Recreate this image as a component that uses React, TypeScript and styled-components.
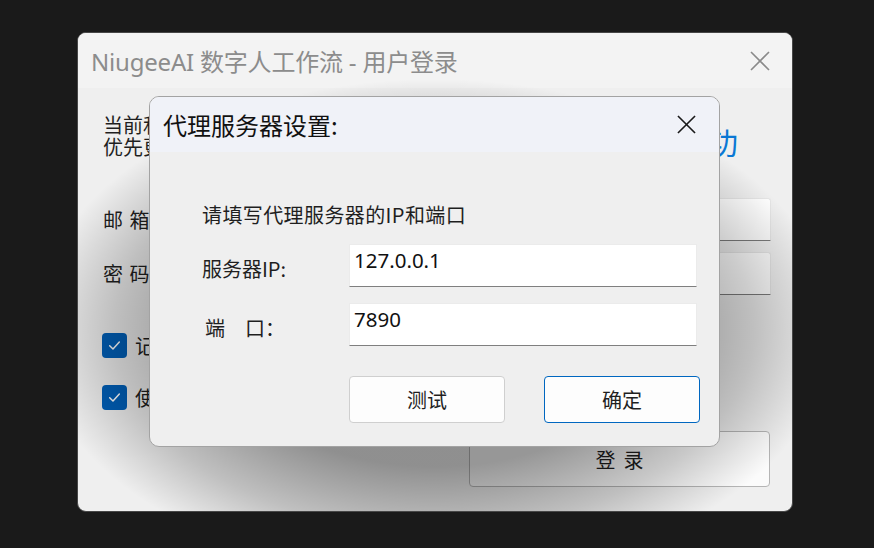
import React from "react";
import styled, { createGlobalStyle } from "styled-components";

const Global = createGlobalStyle`
  html, body { margin: 0; padding: 0; background: #1a1a1a; }
  body { width: 874px; height: 548px; overflow: hidden; font-family: "Noto Sans", "Noto Sans CJK SC", sans-serif; }
`;

const Stage = styled.div`
  width: 874px;
  height: 548px;
  box-sizing: border-box;
  padding: 32px 0 0 77px;
`;

const Window = styled.div`
  position: relative;
  width: 716px;
  height: 480px;
  box-sizing: border-box;
  border: 1px solid #474747;
  border-radius: 9px;
  background: #efefef;
  overflow: hidden;
  display: flex;
  flex-direction: column;
`;

const TitleBar = styled.div`
  height: 55px;
  flex: none;
  background: #f3f3f3;
  display: flex;
  align-items: center;
  justify-content: space-between;
  padding: 0 22px 0 13px;
`;

const TitleText = styled.div`
  font-family: "Noto Sans", "Noto Sans CJK SC", sans-serif;
  font-size: 24px;
  color: #8c8c8c;
  font-weight: 400;
  letter-spacing: -0.2px;
`;

const Body = styled.div`
  flex: 1;
  display: flex;
  flex-direction: column;
  padding: 24px 21px 0 25px;
`;

const StatusRow = styled.div`
  display: flex;
  justify-content: space-between;
  align-items: flex-start;
  height: 46px;
`;

const StatusText = styled.div`
  font-family: "Noto Sans CJK SC", sans-serif;
  font-size: 20px;
  line-height: 22px;
  color: #1f1f1f;
  padding-top: 2px;
`;

const StatusBlue = styled.div`
  font-family: "Noto Sans CJK SC", sans-serif;
  font-size: 30px;
  line-height: 34px;
  color: #0a78d4;
  margin-top: 12px;
  margin-right: 33px;
`;

const FormRow = styled.div<{ $top: number }>`
  display: flex;
  align-items: center;
  height: 43px;
  margin-top: ${(p) => p.$top}px;
`;

const BackLabel = styled.div`
  width: 72px;
  font-family: "Noto Sans CJK SC", sans-serif;
  font-size: 20px;
  color: #1f1f1f;
  letter-spacing: 1px;
`;

const BackInput = styled.div`
  flex: 1;
  height: 43px;
  box-sizing: border-box;
  background: #ffffff;
  border: 1px solid #e6e6e6;
  border-bottom: 1px solid #7c7c7c;
  border-radius: 3px 3px 0 0;
`;

const CheckRow = styled.div<{ $top: number }>`
  display: flex;
  align-items: center;
  gap: 8px;
  height: 25px;
  margin-top: ${(p) => p.$top}px;
  margin-left: -1px;
`;

const CheckBox = styled.div`
  width: 25px;
  height: 25px;
  border-radius: 4px;
  background: #005fb8;
  display: flex;
  align-items: center;
  justify-content: center;
`;

const CheckLabel = styled.div`
  font-family: "Noto Sans CJK SC", sans-serif;
  font-size: 20px;
  color: #1f1f1f;
`;

const LoginButton = styled.div`
  align-self: flex-end;
  margin-top: 21px;
  margin-right: 1px;
  width: 301px;
  height: 56px;
  box-sizing: border-box;
  border: 1px solid #b5b5b5;
  border-radius: 4px;
  background: #fbfbfb;
  display: flex;
  align-items: center;
  justify-content: center;
  font-family: "Noto Sans CJK SC", sans-serif;
  font-size: 20px;
  color: #1f1f1f;
  letter-spacing: 8px;
  padding-left: 8px;
`;

const ModalLayer = styled.div`
  position: absolute;
  inset: 0;
  z-index: 2;
  pointer-events: none;
`;

const DialogShadow = styled.div`
  position: absolute;
  left: -44px;
  top: 46px;
  width: 800px;
  height: 500px;
  background: radial-gradient(farthest-side at 50% 50%, rgba(0, 0, 0, 0.4) 55%, rgba(0, 0, 0, 0.2) 80%, rgba(0, 0, 0, 0) 100%);
`;

const Dialog = styled.div`
  position: absolute;
  left: 71px;
  top: 63px;
  width: 571px;
  height: 351px;
  box-sizing: border-box;
  border: 1px solid #a3a3a3;
  border-radius: 10px;
  background: #efefef;
  display: flex;
  flex-direction: column;
  pointer-events: auto;
`;

const DialogHeader = styled.div`
  height: 55px;
  flex: none;
  background: #f0f2f8;
  border-radius: 9px 9px 0 0;
  display: flex;
  align-items: center;
  justify-content: space-between;
  padding: 0 23px 0 13px;
`;

const DialogTitle = styled.div`
  font-family: "Noto Sans CJK SC", sans-serif;
  font-size: 24px;
  color: #111;
  margin-top: -1px;
`;

const DialogBody = styled.div`
  display: flex;
  flex-direction: column;
  padding: 50px 0 0 52px;
`;

const Hint = styled.div`
  font-family: "Noto Sans CJK SC", sans-serif;
  font-size: 20px;
  line-height: 26px;
  color: #1f1f1f;
  letter-spacing: 0.4px;
`;

const FieldRow = styled.div<{ $top: number }>`
  display: flex;
  align-items: center;
  margin-top: ${(p) => p.$top}px;
`;

const FieldLabel = styled.div<{ $indent?: number }>`
  width: 147px;
  box-sizing: border-box;
  padding-left: ${(p) => p.$indent ?? 0}px;
  padding-top: 6px;
  font-family: "Noto Sans CJK SC", sans-serif;
  font-size: 20px;
  color: #1f1f1f;
  white-space: pre;
`;

const FieldInput = styled.div`
  width: 348px;
  height: 43px;
  box-sizing: border-box;
  background: #ffffff;
  border: 1px solid #ebebeb;
  border-bottom: 1px solid #7f7f7f;
  padding: 1px 0 0 4px;
  font-family: "Noto Sans", sans-serif;
  font-size: 20.5px;
  line-height: 28px;
  color: #111;
`;

const ButtonRow = styled.div`
  display: flex;
  gap: 39px;
  margin-top: 30px;
  padding-left: 147px;
`;

const DialogButton = styled.div<{ $primary?: boolean }>`
  width: 156px;
  height: 47px;
  box-sizing: border-box;
  border: 1px solid ${(p) => (p.$primary ? "#0067c0" : "#cfcfcf")};
  border-radius: 4px;
  background: #fdfdfd;
  display: flex;
  align-items: center;
  justify-content: center;
  font-family: "Noto Sans CJK SC", sans-serif;
  font-size: 20px;
  color: #1f1f1f;
`;

const CloseIcon = ({ color, size, width }: { color: string; size: number; width: number }) => (
  <svg width={size} height={size} viewBox="0 0 20 20">
    <path d="M1 1 L19 19 M19 1 L1 19" stroke={color} strokeWidth={width} fill="none" />
  </svg>
);

const CheckMark = () => (
  <svg width="15" height="15" viewBox="0 0 14 14">
    <path d="M2.5 7.2 L5.6 10.2 L11.5 3.8" stroke="#fff" strokeWidth="1.4" fill="none" strokeLinecap="round" strokeLinejoin="round" />
  </svg>
);

export default function App() {
  return (
    <>
      <Global />
      <Stage>
        <Window>
          <TitleBar>
            <TitleText>NiugeeAI 数字人工作流 - 用户登录</TitleText>
            <CloseIcon color="#8a8a8a" size={20} width={1.6} />
          </TitleBar>
          <Body>
            <StatusRow>
              <StatusText>
                当前和服务器的连接状态
                <br />
                优先更新到最新版本
              </StatusText>
              <StatusBlue>登录成功</StatusBlue>
            </StatusRow>
            <FormRow $top={40}>
              <BackLabel>邮 箱</BackLabel>
              <BackInput />
            </FormRow>
            <FormRow $top={11}>
              <BackLabel>密 码</BackLabel>
              <BackInput />
            </FormRow>
            <CheckRow $top={38}>
              <CheckBox>
                <CheckMark />
              </CheckBox>
              <CheckLabel>记住密码</CheckLabel>
            </CheckRow>
            <CheckRow $top={27}>
              <CheckBox>
                <CheckMark />
              </CheckBox>
              <CheckLabel>使用代理服务器</CheckLabel>
            </CheckRow>
            <LoginButton>登录</LoginButton>
          </Body>
          <ModalLayer>
            <DialogShadow />
            <Dialog>
              <DialogHeader>
                <DialogTitle>代理服务器设置:</DialogTitle>
                <CloseIcon color="#1a1a1a" size={19} width={1.7} />
              </DialogHeader>
              <DialogBody>
                <Hint>请填写代理服务器的IP和端口</Hint>
                <FieldRow $top={16}>
                  <FieldLabel>服务器IP:</FieldLabel>
                  <FieldInput>127.0.0.1</FieldInput>
                </FieldRow>
                <FieldRow $top={16}>
                  <FieldLabel $indent={3}>端　口：</FieldLabel>
                  <FieldInput>7890</FieldInput>
                </FieldRow>
                <ButtonRow>
                  <DialogButton>测试</DialogButton>
                  <DialogButton $primary>确定</DialogButton>
                </ButtonRow>
              </DialogBody>
            </Dialog>
          </ModalLayer>
        </Window>
      </Stage>
    </>
  );
}
